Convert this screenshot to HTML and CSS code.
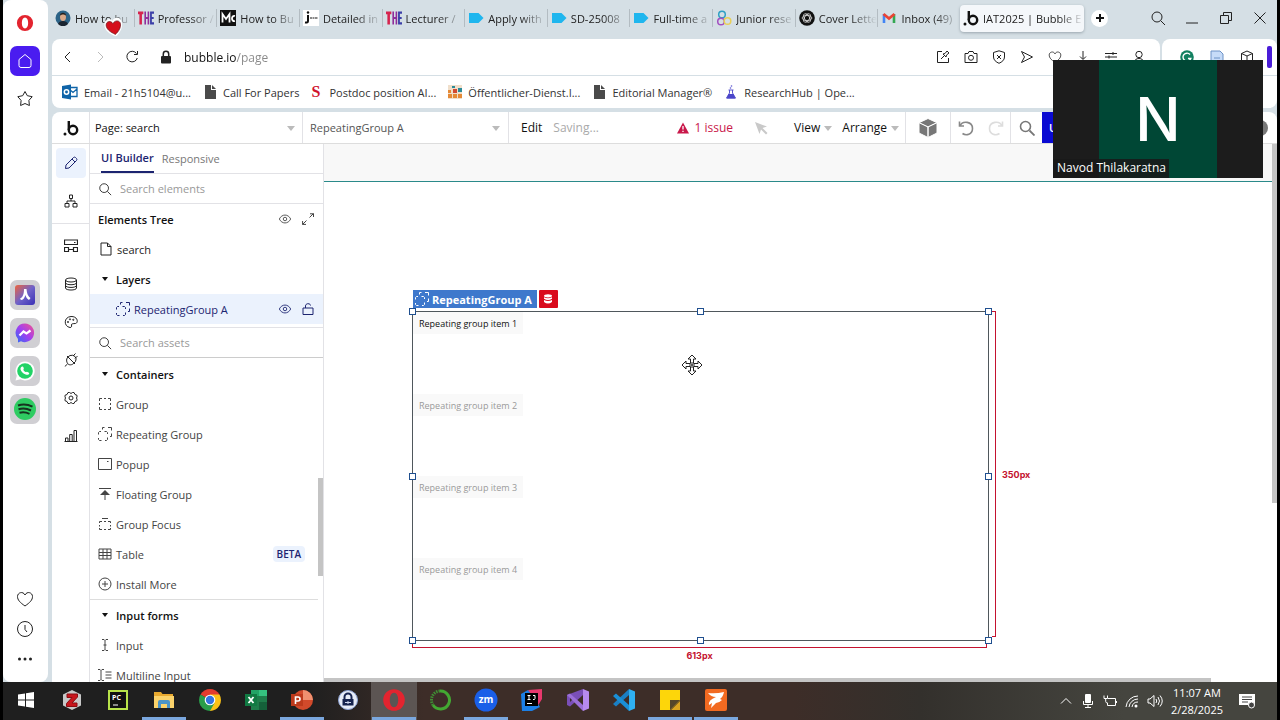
FILE: index.html
```html
<!DOCTYPE html>
<html lang="en">
<head>
  <meta charset="UTF-8">
  <meta name="viewport" content="width=device-width, initial-scale=1.0">
  <title>IAT2025 | Bubble Editor</title>
  <link rel="stylesheet" href="styles.css">
</head>
<body>
  <!-- Shared icons -->
  <svg class="sprite" aria-hidden="true">
    <symbol id="i-search" viewBox="0 0 16 16"><circle cx="7" cy="7" r="5"/><path d="M10.7 10.7 15 15"/></symbol>
    <symbol id="i-caret" viewBox="0 0 8 8"><path d="M0 2h8L4 7z" fill="currentColor" stroke="none"/></symbol>
    <symbol id="i-caret-small" viewBox="0 0 8 8"><path d="M1 2h6L4 6z" fill="currentColor" stroke="none"/></symbol>
    <symbol id="i-heart" viewBox="0 0 18 18"><path d="M9 16C4 12.500 1.500 10 1.500 6.500 1.500 2.500 7 .8 9 5c2-4.200 7.500-2.500 7.500 1.500C16.500 10 14 12.500 9 16z"/></symbol>
    <symbol id="i-eye" viewBox="0 0 16 16"><path d="M1.500 8c3-6 10-6 13 0-3 6-10 6-13 0z"/><circle cx="8" cy="8" r="2"/></symbol>
    <symbol id="i-repeat" viewBox="0 0 14 14"><path d="M.5 7.500V5.500l1-1H3M6.500 4.500h2l1 1V7M9.500 10.500v2l-1 1H7M3.500 13.500h-2l-1-1V11M4.500 2.500V.5H6.500M10 .5h3.500V3.500M13.500 6.500v3H12"/></symbol>
    <symbol id="i-page" viewBox="0 0 14 14"><path d="M2 0h6v5h5v9H2zM9 0l4 4H9z" fill="#4a4a4a" stroke="none"/></symbol>
    <symbol id="i-tag" viewBox="0 0 16 12"><path d="M1 1h9.500L15.500 6l-5 5H1z" fill="#1fb6ee" stroke="none"/></symbol>
    <symbol id="i-the" viewBox="0 0 15 14"><g stroke="none"><path d="M0 1h5v2.500H3.700V13H1.300V3.500H0z" fill="#d6244e"/><path d="M6 1h1.500v5H9V1h1.500v12H9V8H7.500v5H6z" fill="#8f2d9b"/><path d="M11.300 1H15v2h-2v3h1.700v2H13v3h2v2h-3.700z" fill="#3b3fa8"/></g></symbol>
    <symbol id="i-bubble" viewBox="0 0 16 16"><circle cx="10" cy="10" r="4.200" fill="none" stroke="#111" stroke-width="2.400"/><path d="M5.800 1v9" stroke="#111" stroke-width="2.400"/><circle cx="2" cy="14" r="1.500" fill="#111" stroke="none"/></symbol>
    <symbol id="i-opera" viewBox="0 0 20 20"><path fill-rule="evenodd" d="M10 1a9 9 0 1 0 0 18 9 9 0 0 0 0-18zm0 3c2.200 0 3.500 2.600 3.500 6s-1.300 6-3.500 6-3.500-2.600-3.500-6S7.800 4 10 4z" fill="#e3242f" stroke="none"/></symbol>
  </svg>

  <div class="desktop">
    <div class="browser">

      <!-- Opera sidebar -->
      <nav class="sidebar">
        <button class="side-btn" aria-label="Opera"><svg class="ico-18"><use href="#i-opera"/></svg></button>
        <button class="side-btn home" aria-label="Home"><svg class="ico-16" viewBox="0 0 16 16"><path d="M2 6.500 8 1.500l6 5v6q0 2-2 2H4q-2 0-2-2z"/></svg></button>
        <button class="side-btn" aria-label="Bookmarks"><svg class="ico-18" viewBox="0 0 18 18"><path d="m9 1.500 2.300 4.200 4.900 1-3.300 3.700.5 5.100L9 13.500l-4.400 2 .5-5.100L1.800 6.700l4.900-1z" stroke-linejoin="round"/></svg></button>
        <div class="side-apps">
          <button class="app-btn" aria-label="Aria"><svg class="ico-20" viewBox="0 0 20 20"><defs><linearGradient id="aria" x1="0" y1="0" x2="1" y2="1"><stop offset="0" stop-color="#f0643c"/><stop offset=".5" stop-color="#6f62c9"/><stop offset="1" stop-color="#3a2fb5"/></linearGradient></defs><rect width="20" height="20" rx="3" fill="url(#aria)" stroke="none"/><path d="M9 4h2.500c.5 5 1.500 7 4 9l-1.500 2c-2-1-3-3-3.500-5-1 3-2.500 5-4.500 5l-1-1.500c3-1 4-5 4-9.500z" fill="#fff" stroke="none"/></svg></button>
          <button class="app-btn" aria-label="Messenger"><svg class="ico-20" viewBox="0 0 20 20"><defs><linearGradient id="msgr" x1="1" y1="0" x2="0" y2="1"><stop offset="0" stop-color="#f4548a"/><stop offset=".5" stop-color="#a33ff0"/><stop offset="1" stop-color="#2a6df5"/></linearGradient></defs><path d="M10 .5a9.300 9.300 0 1 1-4 17.800L3 19.500V16A9.300 9.300 0 0 1 10 .5z" fill="url(#msgr)" stroke="none"/><path d="m4.500 12.500 4-4 3 2 4-3" stroke="#fff" stroke-width="2.200"/></svg></button>
          <button class="app-btn" aria-label="WhatsApp"><svg class="ico-20" viewBox="0 0 20 20"><path d="M10 .5a9.500 9.500 0 1 1-4.500 17.800L.5 19.500l1.300-4.800A9.500 9.500 0 0 1 10 .5z" fill="#fff" stroke="none"/><circle cx="10" cy="10" r="7.800" fill="#22d366" stroke="none"/><path d="M7 5.500c1.500-.5 1.800 1.500 1.800 2.300-1.500 1 1.700 4.200 2.900 3 1 .2 3 1 2.500 2-1.500 3-8.500-1-8.700-4.800 0-1 .5-2 1.500-2.500z" fill="#fff" stroke="none"/></svg></button>
          <button class="app-btn" aria-label="Spotify"><svg class="ico-24" viewBox="0 0 24 24"><circle cx="12" cy="12" r="11" fill="#2ecc62" stroke="none"/><path d="M5 8.500c5-1.500 10-1 14.500 1.200M5.500 12.300c4.500-1.300 8.500-.8 12.500 1.200M6.500 15.800c4-1 6.500-.6 10 1" stroke="#16331f" stroke-width="2"/></svg></button>
        </div>
        <div class="side-bottom">
          <button class="side-btn" aria-label="Favourites"><svg class="ico-18"><use href="#i-heart"/></svg></button>
          <button class="side-btn" aria-label="History"><svg class="ico-18" viewBox="0 0 18 18"><circle cx="9" cy="9" r="7.500"/><path d="M9 5v4.500l2 2.500"/></svg></button>
          <button class="side-btn" aria-label="More"><svg class="ico-16" viewBox="0 0 16 16"><g fill="#222" stroke="none"><circle cx="2.500" cy="8" r="1.500"/><circle cx="8" cy="8" r="1.500"/><circle cx="13.500" cy="8" r="1.500"/></g></svg></button>
        </div>
      </nav>

      <div class="main">
        <!-- Tab strip -->
        <header class="tab-strip">
          <div class="tabs">
            <button class="tab"><svg class="ico-16" viewBox="0 0 16 16"><circle cx="8" cy="8" r="7.500" fill="#2c6387" stroke="none"/><path d="M3 14c1-4 9-4 10 0-3 3-7 3-10 0z" fill="#1a2430" stroke="none"/><ellipse cx="8" cy="7" rx="3" ry="4" fill="#d9a888" stroke="none"/><path d="M4.800 6C4.500 1.500 11.500 1.500 11.200 6 10 4 6 4 4.800 6z" fill="#222" stroke="none"/></svg><span>How to bu</span></button>
            <button class="tab"><svg class="ico-16"><use href="#i-the"/></svg><span>Professor /</span></button>
            <button class="tab"><svg class="ico-16" viewBox="0 0 16 16"><rect width="16" height="16" fill="#111" stroke="none"/><path d="M2.500 12.500V4l3.500 5L9.500 4v8.500M15 6c-4-1-4 6 0 5" stroke="#fff" stroke-width="1.800"/></svg><span>How to Bu</span></button>
            <button class="tab"><svg class="ico-16" viewBox="0 0 16 16"><rect width="16" height="16" fill="#fff" stroke="none"/><path d="M5 5v6q0 2-3 1.500" stroke="#111" stroke-width="2"/><circle cx="5" cy="2.500" r="1.200" fill="#111" stroke="none"/><path d="M7 8h8" stroke="#888" stroke-width="2" stroke-dasharray="2 .5"/></svg><span>Detailed in</span></button>
            <button class="tab"><svg class="ico-16"><use href="#i-the"/></svg><span>Lecturer /</span></button>
            <button class="tab"><svg class="ico-16"><use href="#i-tag"/></svg><span>Apply with</span></button>
            <button class="tab"><svg class="ico-16"><use href="#i-tag"/></svg><span>SD-25008</span></button>
            <button class="tab"><svg class="ico-16"><use href="#i-tag"/></svg><span>Full-time a</span></button>
            <button class="tab"><svg class="ico-16" viewBox="0 0 16 16"><circle cx="6" cy="4.500" r="3.300" stroke="#2f9fc4" stroke-width="1.500"/><circle cx="5" cy="11.500" r="3.300" stroke="#a24fc0" stroke-width="1.500"/><circle cx="11.500" cy="11" r="3.300" stroke="#e8cf58" stroke-width="1.500"/></svg><span>Junior rese</span></button>
            <button class="tab"><svg class="ico-16" viewBox="0 0 16 16"><circle cx="8" cy="8" r="7.800" fill="#111" stroke="none"/><g stroke="#ddd" stroke-width=".8"><ellipse cx="8" cy="8" rx="4.800" ry="2.500"/><ellipse cx="8" cy="8" rx="4.800" ry="2.500" transform="rotate(60 8 8)"/><ellipse cx="8" cy="8" rx="4.800" ry="2.500" transform="rotate(120 8 8)"/></g></svg><span>Cover Lette</span></button>
            <button class="tab"><svg class="ico-16" viewBox="0 0 16 16"><path d="M3 13V4" stroke="#4285f4" stroke-width="2.600"/><path d="M13 13V4" stroke="#34a853" stroke-width="2.600"/><path d="m2.500 4 5.500 4.500L13.500 4" stroke="#ea4335" stroke-width="2.800"/></svg><span>Inbox (49)</span></button>
          </div>
          <button class="tab active"><svg class="ico-16"><use href="#i-bubble"/></svg><span>IAT2025 | Bubble E</span></button>
          <button class="new-tab" aria-label="New tab"><svg class="ico-10" viewBox="0 0 10 10"><path d="M5 1v8M1 5h8" stroke="#111" stroke-width="2"/></svg></button>
          <div class="window-controls">
            <button aria-label="Search tabs"><svg class="ico-16"><use href="#i-search"/></svg></button>
            <button aria-label="Minimize"><svg class="ico-12" viewBox="0 0 12 12"><path d="M0 11h12"/></svg></button>
            <button aria-label="Restore"><svg class="ico-12" viewBox="0 0 12 12"><path d="M.5 3.500h8v8h-8zM3.500 3V.5h8v8H9"/></svg></button>
            <button aria-label="Close"><svg class="ico-12" viewBox="0 0 12 12"><path d="m.5.5 11 11m0-11-11 11"/></svg></button>
          </div>
          <svg class="reaction" viewBox="0 0 20 20"><g transform="rotate(-12 10 10)"><path d="M10 19.500C4 16 0 11 1 6 2 1 8 0 10 3.500 13-.5 19 2 18.700 7.500 18.500 12 15 17 10 19.500z" fill="#fff" stroke="none"/><path d="M9.800 17.500C5 14 2 10.500 2.700 6.500c.8-4 5.800-3.700 7 0 2.300-3.200 7.300-2.200 7.300 1.500 0 3.500-3.200 7.500-7.200 9.500z" fill="#d5101c" stroke="#5c0a10" stroke-width=".6"/></g></svg>
        </header>

        <!-- Address bar -->
        <div class="address-row">
          <div class="address-bar">
            <button aria-label="Back"><svg class="ico-12" viewBox="0 0 12 12"><path d="M8 1 3 6l5 5"/></svg></button>
            <button class="disabled" aria-label="Forward"><svg class="ico-12" viewBox="0 0 12 12"><path d="m4 1 5 5-5 5"/></svg></button>
            <button aria-label="Reload"><svg class="ico-14" viewBox="0 0 14 14"><path d="M11.500 3.500A5.300 5.300 0 1 0 12.300 8M12.500 1v3.500H9"/></svg></button>
            <svg class="ico-14 lock" viewBox="0 0 14 14"><rect x="2" y="6" width="10" height="7.500" rx="1" fill="#222" stroke="none"/><path d="M4.300 6V4a2.700 2.700 0 0 1 5.400 0v2" stroke="#222" stroke-width="1.500"/></svg>
            <input class="url" type="text" aria-label="Address" value="bubble.io/page">
            <div class="page-actions">
              <button aria-label="Pin"><svg class="ico-14" viewBox="0 0 14 14"><path d="M6 1.500H1.500v11h11V8M5 9l3-3M7 4l3 3 .5-2 2.500-2-2-2-2 2.500z"/></svg></button>
              <button aria-label="Snapshot"><svg class="ico-14" viewBox="0 0 14 14"><path d="M1 3.500h3l1-2h4l1 2h3v9H1z"/><circle cx="7" cy="7.800" r="2.500"/></svg></button>
              <button aria-label="Shield"><svg class="ico-14" viewBox="0 0 14 14"><path d="M7 .8 12.500 2.500V7c0 3-2.500 5-5.500 6.300C4 12 1.500 10 1.500 7V2.500zM5 5l4 4m0-4L5 9"/></svg></button>
              <button aria-label="Send"><svg class="ico-14" viewBox="0 0 14 14"><path d="m1.500 1.500 11 5.500-11 5.500L4.500 7z"/></svg></button>
              <button aria-label="Like"><svg class="ico-14"><use href="#i-heart"/></svg></button>
              <button aria-label="Downloads"><svg class="ico-14" viewBox="0 0 14 14"><path d="M7 1v8M4 6.500 7 9.500l3-3M1 10v3h12v-3"/></svg></button>
              <button aria-label="Setup"><svg class="ico-14" viewBox="0 0 14 14"><path d="M1 3.500h12M1 7h12M1 10.500h12M9 2v3M5 5.500v3"/></svg></button>
              <button aria-label="Profile"><svg class="ico-14" viewBox="0 0 14 14"><circle cx="7" cy="4.500" r="3.200"/><path d="M1.500 13c1-6 10-6 11 0"/></svg></button>
            </div>
          </div>
          <div class="extensions">
            <button aria-label="Grammarly"><svg class="ico-14" viewBox="0 0 14 14"><circle cx="7" cy="7" r="6.800" fill="#128060" stroke="none"/><path d="M10 4.500a4 4 0 1 0 .8 4H8" stroke="#fff" stroke-width="1.400"/></svg></button>
            <button aria-label="Docs"><svg class="ico-14" viewBox="0 0 14 14"><path d="M1 1h9l3 3v9H1z" fill="#c6dbf8" stroke="#6d92c6"/><path d="M4 8h6" stroke="#6d92c6"/></svg></button>
            <button aria-label="Extensions"><svg class="ico-14" viewBox="0 0 14 14"><path d="m7 1 5.500 2.500v7L7 13l-5.500-2.500v-7zM1.500 3.500 7 6l5.500-2.500M7 6v7"/></svg></button>
            <span class="accent"></span>
          </div>
        </div>

        <!-- Bookmarks -->
        <nav class="bookmarks">
          <a href="#"><svg class="ico-16" viewBox="0 0 16 16"><path d="M7 3.500h8v9H7zM7 5l4 3.500L15 5" fill="#fff" stroke="#0f64a8" stroke-width="1.300"/><path d="m0 2 9-1.500v15L0 14z" fill="#0f64a8" stroke="none"/><circle cx="4.500" cy="8" r="2.200" stroke="#fff" stroke-width="1.500"/></svg>Email - 21h5104@u...</a>
          <a href="#"><svg class="ico-14"><use href="#i-page"/></svg>Call For Papers</a>
          <a href="#"><b class="fav-s">S</b>Postdoc position AI...</a>
          <a href="#"><svg class="ico-14" viewBox="0 0 14 14"><rect width="14" height="14" fill="#f0dfcb" stroke="none"/><path d="M0 9h4v4H0zM5 9h4v4H5zM10 9h4v4h-4zM0 5h3v3H0z" fill="#e58a36" stroke="none"/><path d="M5 4h4v4H5z" fill="#d14b32" stroke="none"/><path d="M10 3h4v4h-4zM4 1h3v2H4z" fill="#2b8a98" stroke="none"/></svg>Öffentlicher-Dienst.I...</a>
          <a href="#"><svg class="ico-14"><use href="#i-page"/></svg>Editorial Manager®</a>
          <a href="#"><svg class="ico-14" viewBox="0 0 14 14"><path d="M5.500 5v3L2.500 13h9l-3-5V5M4.500 5h5" stroke="#5b56cf"/><path d="m4.500 9-2 4.500h9l-2-4.500z" fill="#4b46c9" stroke="none"/><circle cx="6.500" cy="3" r=".8" fill="#5b56cf" stroke="none"/><circle cx="7.500" cy="1" r=".8" fill="#5b56cf" stroke="none"/></svg>ResearchHub | Ope...</a>
        </nav>

        <!-- Bubble editor -->
        <div class="editor">
          <div class="toolbar">
            <button class="logo" aria-label="Bubble"><svg class="ico-16"><use href="#i-bubble"/></svg></button>
            <label class="picker page-picker"><select aria-label="Page"><option>Page: search</option></select><svg class="ico-8"><use href="#i-caret"/></svg></label>
            <label class="picker element-picker"><select aria-label="Element"><option>RepeatingGroup A</option></select><svg class="ico-8"><use href="#i-caret"/></svg></label>
            <div class="tool-menu">
              <button>Edit</button>
              <span class="saving">Saving...</span>
              <button class="issue"><svg class="ico-12" viewBox="0 0 12 12"><path d="M6 .5 12 11.500H0z" fill="#c9184a" stroke="none"/><path d="M6 4v3.500M6 8.800V10" stroke="#fff" stroke-width="1.300"/></svg>1 issue</button>
              <svg class="ico-14 pointer" viewBox="0 0 14 14"><path d="m1 1 12 4.500-4.500 1.500 5 5-1.500 1.500-5-5L5.500 13z" fill="#c9c9c9" stroke="none"/></svg>
              <button class="menu">View<svg class="ico-8"><use href="#i-caret"/></svg></button>
              <button class="menu">Arrange<svg class="ico-8"><use href="#i-caret"/></svg></button>
            </div>
            <button class="cell cube" aria-label="Components"><svg class="ico-20" viewBox="0 0 20 20"><g fill="#777" stroke="#fff"><path d="m10 .5 9 4.200-9 4.300-9-4.300z"/><path d="M1 4.700 10 9v10.500l-9-4.500zM19 4.700 10 9v10.500l9-4.500z"/></g></svg></button>
            <div class="cell history">
              <button aria-label="Undo"><svg class="ico-16" viewBox="0 0 16 16"><path d="M1.500 1.500v4.500H6M2 6c2.500-6 12.500-4.500 12.500 2.500 0 6-6.500 7.500-10 5" stroke="#888" stroke-width="1.600"/></svg></button>
              <button aria-label="Redo"><svg class="ico-16" viewBox="0 0 16 16"><path d="M14.500 1.500v4.500H10M14 6C11.500 0 1.500 1.500 1.500 8.500c0 6 6.500 7.500 10 5" stroke="#ddd" stroke-width="1.600"/></svg></button>
            </div>
            <button class="cell find" aria-label="Find"><svg class="ico-16" viewBox="0 0 16 16"><circle cx="6.500" cy="6.500" r="5" stroke-width="1.600"/><path d="m10.500 10.500 5 5" stroke-width="1.800"/></svg></button>
            <button class="upgrade">Upgrade</button>
            <span class="avatar"></span>
          </div>

          <div class="workspace">
            <nav class="rail">
              <button class="current" aria-label="Design"><svg class="ico-14" viewBox="0 0 14 14"><path d="m1.500 12.500.5-3.500L9.500 1.500q1-.8 2 0l1 1q.8 1 0 2L5 12zM8 3l3 3"/></svg></button>
              <button aria-label="Workflow"><svg class="ico-14" viewBox="0 0 14 14"><path d="M5.500 1h3v3.500h-3zM1 9.500h4V13H1zM9 9.500h4V13H9zM7 4.500V7M3 9.500V7h8v2.500"/></svg></button>
              <hr>
              <button aria-label="Components"><svg class="ico-14" viewBox="0 0 14 14"><path d="M.5 1h13v4.500H.5zM.5 8.500h4v4h-4zM9.500 8.500h4v4h-4zM4.500 10.500h5M10 3.500h1.500" stroke-width="1.200"/></svg></button>
              <button aria-label="Data"><svg class="ico-14" viewBox="0 0 14 14"><ellipse cx="7" cy="3" rx="5.500" ry="2"/><path d="M1.500 3v8c0 2.700 11 2.700 11 0V3M1.500 5.700c0 2.700 11 2.700 11 0M1.500 8.400c0 2.700 11 2.700 11 0"/></svg></button>
              <button aria-label="Styles"><svg class="ico-14" viewBox="0 0 14 14"><path d="M6 12.500C-.5 11.500-.5 2 7 1.500c7-.3 7.500 6.500 4.500 7-2.500.3-4-.2-4 1.500.3 1.500 0 2.600-1.500 2.500z"/><circle cx="4" cy="7" r=".6"/><circle cx="6" cy="4.300" r=".6"/><circle cx="9.300" cy="4.800" r=".6"/></svg></button>
              <button aria-label="Plugins"><svg class="ico-14" viewBox="0 0 14 14"><path d="m4 4 6 6c-2 2.500-5 2-6 1s-2.500-4.500 0-7zM4 4l2-1.500q3-1 5 1t.5 5L10 10M3.500 11 .8 13.500M9 3l2.500-2.500M11 5.500 13.500 3M3 3l8 8"/></svg></button>
              <button aria-label="Settings"><svg class="ico-14" viewBox="0 0 14 14"><path d="M4 1.500h1.500L7 2.500l1.500-1H10l1 2 2 .8v1.500L12.500 7l.5 1.200v1.500l-2 .8-1 2H8.500L7 11.500l-1.500 1H4l-1-2-2-.8V8.200L1.500 7 1 5.800V4.300l2-.8z"/><circle cx="7" cy="7" r="2"/></svg></button>
              <button aria-label="Logs"><svg class="ico-14" viewBox="0 0 14 14"><path d="M1.500 9h2.500v3.500H1.500zM5.700 5.500h2.500v7H5.700zM10 1.500h2.500v11H10zM.5 12.500h13"/></svg></button>
            </nav>

            <aside class="panel">
              <div class="panel-tabs">
                <button class="selected">UI Builder</button>
                <button>Responsive</button>
              </div>
              <label class="panel-search"><svg class="ico-14"><use href="#i-search"/></svg><input type="text" placeholder="Search elements"></label>
              <div class="row tree-title">Elements Tree
                <span class="row-icons"><svg class="ico-14"><use href="#i-eye"/></svg><svg class="ico-12" viewBox="0 0 12 12"><path d="m7.500 4.500 4-4M8 .8h3.500V4M4.500 7.500l-4 4M.6 8v3.400H4"/></svg></span>
              </div>
              <div class="row page-row"><svg class="ico-14" viewBox="0 0 14 14"><path d="M2 1h6.500L12 4.500V13H2zM8.500 1v3.500H12"/></svg>search</div>
              <div class="row group-title"><svg class="ico-8"><use href="#i-caret-small"/></svg>Layers</div>
              <div class="row layer"><svg class="ico-14"><use href="#i-repeat"/></svg>RepeatingGroup A
                <span class="row-icons"><svg class="ico-14"><use href="#i-eye"/></svg><svg class="ico-12" viewBox="0 0 12 12"><path d="M1 5h10v6.500H1zM3.500 5V3c0-3 5-3 5-.5"/></svg></span>
              </div>
              <label class="panel-search assets"><svg class="ico-14"><use href="#i-search"/></svg><input type="text" placeholder="Search assets"></label>
              <div class="palette">
                <div class="row group-title"><svg class="ico-8"><use href="#i-caret-small"/></svg>Containers</div>
                <div class="row item"><svg class="ico-14" viewBox="0 0 14 14"><path d="M1.500 4V1.500H4M6 1.500h2M10 1.500h2.500V4M12.500 6v2M12.500 10v2.500H10M8 12.500H6M4 12.500H1.500V10M1.500 8V6"/></svg>Group</div>
                <div class="row item"><svg class="ico-14"><use href="#i-repeat"/></svg>Repeating Group</div>
                <div class="row item"><svg class="ico-14" viewBox="0 0 14 14"><path d="M.5 1.500h13v11H.5zM9 4.500h1.500"/></svg>Popup</div>
                <div class="row item"><svg class="ico-14" viewBox="0 0 14 14"><path d="M1 1.500h12M7 6v7"/><path d="m7 3 5 5H2z" fill="#444" stroke="none"/></svg>Floating Group</div>
                <div class="row item"><svg class="ico-14" viewBox="0 0 14 14"><path d="M4 1.500h6M1.500 6V4.500H4M6 4.500h2M10 4.500h2.500V6M12.500 8v1.500M12.500 11v1.500H10M8 12.500H6M4 12.500H1.500V11M1.500 9.500V8"/></svg>Group Focus</div>
                <div class="row item"><svg class="ico-14" viewBox="0 0 14 14"><path d="M1 2h12v10H1zM1 5.500h12M1 8.500h12M5 2v10M9 2v10"/></svg>Table<span class="beta">BETA</span></div>
                <div class="row item"><svg class="ico-14" viewBox="0 0 14 14"><circle cx="7" cy="7" r="6"/><path d="M7 4v6M4 7h6"/></svg>Install More</div>
                <div class="row group-title divided"><svg class="ico-8"><use href="#i-caret-small"/></svg>Input forms</div>
                <div class="row item"><svg class="ico-14" viewBox="0 0 14 14"><path d="M4 1.500h2l1 1 1-1h2M4 12.500h2l1-1 1 1h2M7 2.500v9M5.500 7h3"/></svg>Input</div>
                <div class="row item"><svg class="ico-14" viewBox="0 0 14 14"><path d="M0 1.500h2l1 1 1-1h2M0 12.500h2l1-1 1 1h2M3 2.500v9M7.500 4h6M7.500 7h6M7.500 10h6"/></svg>Multiline Input</div>
                <span class="palette-thumb"></span>
              </div>
            </aside>

            <!-- Design canvas -->
            <main class="canvas">
              <div class="page-header"></div>
              <div class="element-tags">
                <span class="element-name"><svg class="ico-14"><use href="#i-repeat"/></svg>RepeatingGroup A</span>
                <button class="data-tag" aria-label="Data source"><svg class="ico-10" viewBox="0 0 10 10"><g fill="#fff" stroke="none"><ellipse cx="5" cy="1.800" rx="4" ry="1.600"/><path d="M1 3.300q4 2 8 0v1.500q-4 2.400-8 0zM1 6q4 2 8 0v2q-4 3-8 0z"/></g></svg></button>
              </div>
              <div class="repeating-group">
                <div><span class="cell-label first">Repeating group item 1</span></div>
                <div><span class="cell-label">Repeating group item 2</span></div>
                <div><span class="cell-label">Repeating group item 3</span></div>
                <div><span class="cell-label">Repeating group item 4</span></div>
                <span class="measure-w">613px</span>
                <span class="measure-h">350px</span>
                <i class="handle top left"></i><i class="handle top center"></i><i class="handle top right"></i>
                <i class="handle middle left"></i><i class="handle middle right"></i>
                <i class="handle bottom left"></i><i class="handle bottom center"></i><i class="handle bottom right"></i>
              </div>
              <svg class="move-cursor" viewBox="0 0 22 22"><path d="m11 1 4 4h-2.500v4.500H17V7l4 4-4 4v-2.500h-4.500V17H15l-4 4-4-4h2.500v-4.500H5V15l-4-4 4-4v2.500h4.500V5H7z" fill="#fff" stroke="#222"/><path d="M11 8v6M8 11h6" stroke="#222"/></svg>
              <span class="scroll-y"></span>
              <span class="scroll-x"></span>
            </main>
          </div>
        </div>
      </div>

      <!-- Meeting video tile -->
      <div class="call-tile">
        <div class="call-avatar">N</div>
        <span class="call-name">Navod Thilakaratna</span>
      </div>
    </div>

    <!-- Windows taskbar -->
    <footer class="taskbar">
      <button class="task" aria-label="Start"><svg class="ico-16" viewBox="0 0 16 16"><path d="m0 2.500 7-1v6H0zM8 1.300 16 0v7.500H8zM0 8.500h7v6l-7-1zM8 8.500h8V16l-8-1.300z" fill="#fff" stroke="none"/></svg></button>
      <button class="task" aria-label="Zotero"><svg class="ico-20" viewBox="0 0 20 20"><path d="m10 0 9 4.500v11L10 20l-9-4.500v-11z" fill="#c8c8c8" stroke="none"/><path d="M5 4h10.500v3L10 13h5v3.500H4.500v-3L10 7.500H5z" fill="#c8161d" stroke="#8a0d12"/></svg></button>
      <button class="task" aria-label="PyCharm"><svg class="ico-20" viewBox="0 0 20 20"><path d="M0 0h20v20H0z" fill="#b8e34a" stroke="none"/><path d="M2 2h16v16H2z" fill="#111" stroke="none"/><path d="M5 15h5" stroke="#fff"/><text x="4" y="10" class="t-pc">PC</text></svg></button>
      <button class="task open" aria-label="File Explorer"><svg class="ico-20" viewBox="0 0 20 20"><path d="M0 2h7l1.500 2H19v13H0z" fill="#e8a92f" stroke="none"/><path d="M0 6h20v12H0z" fill="#fbd36b" stroke="none"/><path d="M4 18v-6q0-2 2-2h8q2 0 2 2v6h-3v-4H7v4z" fill="#4a94c8" stroke="none"/></svg></button>
      <button class="task" aria-label="Chrome"><svg class="ico-24" viewBox="0 0 24 24"><g stroke="none"><path d="M12 12 2.500 6.500a11 11 0 0 1 19 0z" fill="#e33b2e"/><path d="M12 12h-1l1 11a11 11 0 0 0 9.500-16.500H12z" fill="#fbc116"/><path d="M12 12 2.500 6.500A11 11 0 0 0 12 23l4.500-8z" fill="#2a9d4a"/><circle cx="12" cy="12" r="5.300" fill="#fff"/><circle cx="12" cy="12" r="4.200" fill="#3474e0"/></g></svg></button>
      <button class="task" aria-label="Excel"><svg class="ico-24" viewBox="0 0 24 24"><g stroke="none"><path d="M7 2h16v20H7z" fill="#1f7d4b"/><path d="M15 2h8v6h-8z" fill="#35c27f"/><path d="M7 2h8v6H7z" fill="#23a366"/><path d="M15 14h8v8h-8z" fill="#15613a"/><path d="M1 6h12v12H1z" fill="#117a43"/></g><path d="m4.500 9 5 6m0-6-5 6" stroke="#fff" stroke-width="1.800"/></svg></button>
      <button class="task open" aria-label="PowerPoint"><svg class="ico-24" viewBox="0 0 24 24"><g stroke="none"><circle cx="13" cy="12" r="10" fill="#d14a2b"/><path d="M13 2a10 10 0 0 1 10 10H13z" fill="#f0906f"/><path d="M1 6h12v12H1z" fill="#bd3a1c"/></g><path d="M5.500 16V9H8q2 0 2 2t-2 2H6" stroke="#fff" stroke-width="1.600"/></svg></button>
      <button class="task" aria-label="KeePass"><svg class="ico-20" viewBox="0 0 20 20"><circle cx="10" cy="10" r="9.500" fill="#e7ecf8" stroke="#8ea4d6"/><rect x="4.500" y="9" width="11" height="6.500" fill="#16234f" stroke="none"/><path d="M6.500 9V7a3.500 3.500 0 0 1 7 0v2" stroke="#16234f" stroke-width="2"/><path d="M10 11v3M7 12.500h6" stroke="#cfd8ef"/></svg></button>
      <button class="task open focused" aria-label="Opera"><svg class="ico-24"><use href="#i-opera"/></svg></button>
      <button class="task" aria-label="Anaconda"><svg class="ico-24" viewBox="0 0 24 24"><path d="M12 3a9 9 0 1 1-7 14" stroke="#43a832" stroke-width="3"/><path d="M12 3A9 9 0 0 0 5 17" stroke="#3f8f34" stroke-width="3" stroke-dasharray="1.500 1"/></svg></button>
      <button class="task open" aria-label="Zoom"><svg class="ico-24" viewBox="0 0 24 24"><circle cx="12" cy="12" r="11.500" fill="#1a5fe8" stroke="none"/><text x="12" y="15" text-anchor="middle" class="t-zm">zm</text></svg></button>
      <button class="task" aria-label="IntelliJ IDEA"><svg class="ico-24" viewBox="0 0 24 24"><g stroke="none"><path d="M8 2 22 1v10l-5 8z" fill="#e8386d"/><path d="M1 6 8 2l12 17-8 4H2z" fill="#1c7fe6"/><path d="M5 5h13v13H5z" fill="#000"/></g><path d="M7.500 7.500h3M9 7.500v4M7.500 11.500h3M13 7.500h2v3q0 1.500-2 1M7 15.500h5" stroke="#fff"/></svg></button>
      <button class="task" aria-label="Visual Studio"><svg class="ico-24" viewBox="0 0 24 24"><g stroke="none"><path d="M17 1 23 3.500v17L17 23z" fill="#b78af0"/><path d="M1 7v10l3 1.500L17 7V1z" fill="#7a4fb8"/><path d="m1 7 3-1.500L17 17v6z" fill="#9b6fd8"/><path d="M4 10v4l2-2z" fill="#3d2d28"/></g></svg></button>
      <button class="task" aria-label="VS Code"><svg class="ico-24" viewBox="0 0 24 24"><g stroke="none"><path d="M17 1v6L4 18.500 1 16z" fill="#1a7fc4"/><path d="m1 8 3-2.500L17 17v6z" fill="#1a8fd6"/><path d="M17 1 23 3.500v17L17 23z" fill="#2fb0f2"/></g></svg></button>
      <button class="task open" aria-label="Sticky Notes"><svg class="ico-20" viewBox="0 0 20 20"><path d="M0 0h20v10L10 20H0z" fill="#fdd60a" stroke="none"/><path d="M10 20V10h10z" fill="#54462a" stroke="none"/><path d="M20 11v9h-9z" fill="#d9a520" stroke="none"/></svg></button>
      <button class="task open" aria-label="Foxit"><svg class="ico-24" viewBox="0 0 24 24"><rect x="1" y="1" width="22" height="22" rx="2" fill="#f26a21" stroke="none"/><path d="M4 5q8 1 16-1-1 5-4 7l2 1q-3 3-6 3l-5 5 1-5-3 2q-1-5 7-8-5 0-8-4z" fill="#fff" stroke="none"/></svg></button>

      <div class="tray">
        <svg class="ico-14" viewBox="0 0 14 14"><path d="m2 9.500 5-5 5 5"/></svg>
        <svg class="ico-14" viewBox="0 0 14 14"><rect x="4" y="0" width="6" height="9" rx="1" fill="#fff" stroke="none"/><path d="M2.500 7v3.500h9V7M7 10.500V13M4 13.500h6"/></svg>
        <svg class="ico-14" viewBox="0 0 14 14"><path d="M5 4.500h7.500v7H4.500V9M13.500 7v2M1 1.500v3h3.500v-3M2.700 4.500v3q0 1.500 2 1.500"/></svg>
        <svg class="ico-14" viewBox="0 0 14 14"><path d="M1 13A12 12 0 0 1 13 2M4 13a9 9 0 0 1 9-8M7 13a6 6 0 0 1 6-5"/><circle cx="11" cy="12" r="1.500" fill="#fff" stroke="none"/></svg>
        <svg class="ico-16" viewBox="0 0 16 16"><path d="M1 6h2l4-3.500v11L3 10H1zM9 6q1.500 2 0 4M11 4q3 4 0 8M13 2.500q4.500 5.500 0 11"/></svg>
        <time class="clock">11:07 AM<br>2/28/2025</time>
        <svg class="ico-16 notice" viewBox="0 0 16 16"><path d="M0 1h16v11h-3v3l-4-3H0z" fill="#fff" stroke="none"/><path d="M3 4h10M3 6.500h10M3 9h6" stroke="#444"/><circle cx="12.500" cy="12" r="3" fill="#444" stroke="#fff"/></svg>
      </div>
    </footer>
  </div>
</body>
</html>
```

FILE: styles.css
```css
:root {
  --chrome-bg: #d5dfe5;
  --line: #e2e2e6;
  --ink: #222;
  --muted: #999;
  --navy: #1c2470;
  --red: #c4122f;
}

* {
  margin: 0;
  padding: 0;
  box-sizing: border-box;
}

body {
  font-family: "Open Sans", sans-serif;
  font-size: 11px;
  color: var(--ink);
  background: #000;
}

button,
input,
select {
  font: inherit;
  color: inherit;
  background: none;
  border: none;
  outline: none;
}

button {
  display: flex;
  align-items: center;
  justify-content: center;
  white-space: nowrap;
  cursor: pointer;
}

a {
  color: inherit;
  text-decoration: none;
}

svg {
  flex: none;
  fill: none;
  stroke: currentColor;
}

.sprite {
  position: absolute;
  width: 0;
  height: 0;
}

.ico-8 { width: 8px; height: 8px; }
.ico-10 { width: 10px; height: 10px; }
.ico-12 { width: 12px; height: 12px; }
.ico-14 { width: 14px; height: 14px; }
.ico-16 { width: 16px; height: 16px; }
.ico-18 { width: 18px; height: 18px; }
.ico-20 { width: 20px; height: 20px; }
.ico-24 { width: 24px; height: 24px; }

.desktop {
  display: flex;
  flex-direction: column;
  height: 100vh;
  padding: 0 3px;
}

.browser {
  position: relative;
  display: flex;
  flex: 1;
  gap: 4px;
  min-height: 0;
  background: var(--chrome-bg);
}

/* Sidebar */
.sidebar {
  display: flex;
  flex-direction: column;
  align-items: center;
  gap: 8px;
  width: 45px;
  padding: 8px 1px 8px 0;
  background: #fff;
  border-radius: 8px;
}

.side-btn {
  width: 30px;
  height: 30px;
}

.home {
  color: #fff;
  background: #4a1cf0;
  border-radius: 7px;
}

.side-apps {
  display: flex;
  flex-direction: column;
  gap: 8px;
  margin-top: 158px;
}

.app-btn {
  width: 30px;
  height: 30px;
  background: #d0cfd3;
  border-radius: 7px;
}

.side-bottom {
  margin-top: auto;
}

.main {
  display: flex;
  flex: 1;
  flex-direction: column;
  min-width: 0;
}

/* Tab strip */
.tab-strip {
  position: relative;
  display: flex;
  align-items: center;
  height: 36px;
  padding-right: 9px;
}

.tabs {
  display: flex;
  flex: 1;
  min-width: 0;
}

.tab {
  flex: 1;
  gap: 4px;
  min-width: 0;
  height: 18px;
  padding: 0 0 0 3px;
  border-right: 1px solid #b3bcc2;
}

.tabs .tab:last-child {
  border-right: none;
}

.tab span {
  flex: 1;
  overflow: hidden;
  text-align: left;
  mask-image: linear-gradient(90deg, #000 55%, transparent);
}

.tab.active {
  flex: none;
  width: 124px;
  height: 27px;
  background: #f4f7fa;
  border: none;
  border-radius: 4px;
  box-shadow: 0 1px 3px #9aa5ad;
}

.tab.active span {
  mask-image: linear-gradient(90deg, #000 75%, transparent);
}

.new-tab {
  width: 17px;
  height: 17px;
  margin: 0 42px 0 7px;
  background: #fff;
  border-radius: 50%;
}

.window-controls {
  display: flex;
  gap: 18px;
}

.window-controls button {
  width: 16px;
}

.reaction {
  position: absolute;
  left: 52px;
  top: 17px;
  width: 20px;
  height: 20px;
}

/* Address bar */
.address-row {
  display: flex;
  gap: 2px;
  height: 36px;
  margin-top: 3px;
}

.address-bar,
.extensions {
  display: flex;
  align-items: center;
  background: #fff;
  border-radius: 8px 8px 0 0;
}

.address-bar {
  flex: 1;
  padding: 0 14px 0 9px;
}

.address-bar > button {
  width: 14px;
  margin-right: 18px;
}

.disabled {
  color: #bbb;
}

.lock {
  margin: 0 11px 0 2px;
}

.url {
  flex: 1;
  min-width: 0;
  font-size: 12px;
  color: transparent;
  background: linear-gradient(90deg, #111 52px, #888 52px);
  background-clip: text;
}

.page-actions {
  display: flex;
  gap: 14px;
}

.extensions {
  gap: 16px;
  width: 115px;
  padding-left: 18px;
}

.accent {
  width: 5px;
  height: 22px;
  margin-left: -3px;
  background: #4a1cd8;
  border-radius: 2px;
}

/* Bookmarks */
.bookmarks {
  display: flex;
  align-items: center;
  gap: 12px;
  height: 32px;
  margin: 1px 0 4px;
  padding: 0 10px;
  background: #fff;
  border-radius: 0 0 8px 8px;
  color: #333;
}

.bookmarks a {
  display: flex;
  align-items: center;
  gap: 6px;
}

.fav-s {
  width: 12px;
  font-family: "Liberation Serif", serif;
  font-size: 16px;
  color: #d0122c;
}

/* Editor */
.editor {
  display: flex;
  flex: 1;
  flex-direction: column;
  min-height: 0;
  background: #fff;
  border-radius: 8px 8px 0 0;
  overflow: hidden;
}

.toolbar {
  display: flex;
  height: 32px;
  border-bottom: 1px solid #ddd;
}

.logo {
  width: 37px;
}

.picker {
  display: flex;
  align-items: center;
  padding: 0 7px 0 5px;
  border-left: 1px solid var(--line);
  color: #111;
}

.picker svg,
.menu svg {
  color: #bbb;
}

.picker select {
  flex: 1;
  min-width: 0;
  appearance: none;
}

.page-picker {
  width: 213px;
}

.element-picker {
  width: 207px;
  padding-right: 8px;
  padding-left: 7px;
  border-right: 1px solid var(--line);
  color: #555;
}

.tool-menu {
  display: flex;
  flex: 1;
  align-items: center;
  padding: 0 6px 0 12px;
  font-size: 12px;
  color: #111;
}

.saving {
  margin-left: 11px;
  color: #aaa;
}

.issue {
  gap: 6px;
  margin-left: auto;
  color: #c9184a;
}

.pointer {
  margin: 0 26px 0 21px;
}

.menu {
  gap: 4px;
}

.menu + .menu {
  margin-left: 10px;
}

.cell {
  border-left: 1px solid var(--line);
}

.cube {
  width: 45px;
}

.history {
  display: flex;
  justify-content: center;
  gap: 14px;
  width: 60px;
}

.find {
  width: 32px;
  color: #777;
}

.upgrade {
  width: 84px;
  color: #fff;
  background: #0a0ad2;
  font-weight: 600;
  justify-content: flex-start;
  padding-left: 7px;
}

.avatar {
  width: 16px;
  height: 16px;
  margin: 8px 9px 8px 126px;
  background: #777;
  border-radius: 50%;
}

.workspace {
  display: flex;
  flex: 1;
  min-height: 0;
}

.rail {
  display: flex;
  flex-direction: column;
  align-items: center;
  gap: 8px;
  width: 38px;
  padding-top: 4px;
  border-right: 1px solid var(--line);
  color: #222;
}

.rail button {
  flex: none;
  width: 30px;
  height: 30px;
  border-radius: 4px;
}

.rail .current {
  color: var(--navy);
  background: #ebf2fd;
}

.rail hr {
  width: 100%;
  height: 1px;
  margin: -1px 0;
  border: none;
  background: var(--line);
}

/* Panel */
.panel {
  display: flex;
  flex-direction: column;
  width: 234px;
  border-right: 1px solid var(--line);
}

.panel-tabs {
  display: flex;
  flex: none;
  gap: 8px;
  height: 30px;
  padding: 0 11px;
  border-bottom: 1px solid var(--line);
  color: #777;
}

.panel-tabs .selected {
  color: var(--navy);
  font-weight: 600;
  border-bottom: 2px solid var(--navy);
}

.panel-search {
  display: flex;
  flex: none;
  align-items: center;
  gap: 8px;
  height: 30px;
  padding: 0 8px;
  border-bottom: 1px solid var(--line);
}

.panel-search input {
  flex: 1;
  min-width: 0;
}

.panel-search input::placeholder {
  color: var(--muted);
}

.assets {
  height: 31px;
  margin-top: 3px;
  border-top: 1px solid var(--line);
  border-bottom: 1px solid #ccc;
}

.row {
  display: flex;
  flex: none;
  align-items: center;
  gap: 4px;
  height: 30px;
  padding: 0 9px 0 8px;
  white-space: nowrap;
}

.row-icons {
  display: flex;
  align-items: center;
  gap: 10px;
  margin-left: auto;
  color: #444;
}

.tree-title,
.group-title {
  color: #111;
  font-weight: 600;
}

.page-row {
  padding-left: 9px;
}

.group-title {
  gap: 7px;
  padding-left: 11px;
}

.layer {
  padding-left: 26px;
  color: var(--navy);
  background: #ebf2fd;
}

.layer .row-icons {
  color: var(--navy);
}

.palette {
  position: relative;
  flex: 1;
  min-height: 0;
  padding-top: 1px;
  overflow: hidden;
}

.item {
  color: #444;
}

.divided {
  border-top: 1px solid #ddd;
  margin-right: 5px;
  height: 31px;
}

.beta {
  margin: 0 9px 0 auto;
  padding: 1px 4px;
  font-size: 10px;
  font-weight: 600;
  color: var(--navy);
  background: #ebf2fd;
  border-radius: 4px;
}

.palette-thumb {
  position: absolute;
  top: 120px;
  right: 0;
  width: 5px;
  height: 98px;
  background: #c4c4c4;
}

/* Canvas */
.canvas {
  position: relative;
  flex: 1;
  min-width: 0;
  overflow: hidden;
}

.page-header {
  height: 38px;
  background: #f8f8f8;
  border-bottom: 1px solid #2a8a8a;
}

.element-tags {
  position: absolute;
  left: 89px;
  top: 146px;
  display: flex;
  gap: 2px;
}

.element-name {
  display: flex;
  align-items: center;
  gap: 3px;
  height: 18px;
  padding: 0 5px 0 2px;
  color: #fff;
  font-weight: 700;
  background: #3e78cc;
}

.data-tag {
  width: 19px;
  height: 18px;
  background: #d90a1c;
  border-radius: 1px;
}

.repeating-group {
  position: absolute;
  left: 88px;
  top: 167px;
  display: grid;
  grid-template-rows: repeat(4, 1fr);
  width: 577px;
  height: 330px;
  border: 1px solid #4f575c;
  font-size: 9px;
}

.cell-label {
  display: inline-block;
  padding: 5px 6px 4px;
  color: #999;
  background: #f9f9f9;
}

.cell-label.first {
  color: #111;
}

.handle {
  position: absolute;
  width: 7px;
  height: 7px;
  background: #fff;
  border: 1px solid #1f4f8f;
}

.handle.top { top: -4px; }
.handle.middle { top: calc(50% - 3px); }
.handle.bottom { bottom: -4px; }
.handle.left { left: -4px; }
.handle.center { left: calc(50% - 4px); }
.handle.right { right: -4px; }

.measure-w,
.measure-h {
  position: absolute;
  display: flex;
  align-items: center;
  font-family: Inter, sans-serif;
  font-weight: 700;
  color: var(--red);
}

.measure-w {
  flex-direction: column;
  gap: 2px;
  left: 0;
  right: 2px;
  top: calc(100% + 4px);
}

.measure-w::before {
  content: "";
  width: 100%;
  height: 3px;
  border: 1px solid var(--red);
  border-top: none;
}

.measure-h {
  gap: 6px;
  top: 0;
  bottom: 4px;
  left: calc(100% + 4px);
}

.measure-h::before {
  content: "";
  width: 3px;
  height: 100%;
  border: 1px solid var(--red);
  border-left: none;
}

.move-cursor {
  position: absolute;
  left: 357px;
  top: 210px;
  width: 22px;
  height: 22px;
}

.scroll-y,
.scroll-x {
  position: absolute;
  background: #c4c4c4;
}

.scroll-y {
  top: 0;
  right: 0;
  width: 5px;
  height: 359px;
}

.scroll-x {
  left: 0;
  right: 66px;
  bottom: 0;
  height: 4px;
}

/* Video tile over the window */
.call-tile {
  position: absolute;
  top: 60px;
  right: 14px;
  display: flex;
  justify-content: center;
  width: 210px;
  height: 118px;
  background: #1c1c1c;
}

.call-avatar {
  display: flex;
  align-items: center;
  justify-content: center;
  width: 118px;
  line-height: 64px;
  font-family: Inter, sans-serif;
  font-size: 60px;
  font-weight: 500;
  color: #fff;
  background: #004735;
}

.call-name {
  position: absolute;
  left: 0;
  bottom: 0;
  padding: 0 3px 2px 4px;
  font-size: 12px;
  color: #fff;
  background: rgba(25, 25, 25, 0.85);
}

/* Taskbar */
.taskbar {
  display: flex;
  height: 38px;
  background: linear-gradient(90deg, #1f1f1f 0, #1f1f1f 24%, #3d2d28 33%, #3d2d28 62%, #33302c 72%, #45453f 88%, #45453f);
  color: #fff;
}

.task {
  width: 46px;
  border-bottom: 3px solid transparent;
}

.task.open {
  border-image: linear-gradient(90deg, transparent 4px, #7aa7de 4px, #7aa7de 42px, transparent 42px) 3;
  border-style: solid;
  border-width: 0 0 3px;
}

.task.focused {
  background: #5c5553;
}

.t-pc {
  font: bold 7px "Open Sans", sans-serif;
  fill: #fff;
  stroke: none;
}

.t-zm {
  font: bold 10px "Open Sans", sans-serif;
  fill: #fff;
  stroke: none;
}

.tray {
  display: flex;
  align-items: center;
  gap: 8px;
  margin-left: auto;
  padding-right: 22px;
}

.clock {
  line-height: 17px;
  text-align: center;
}

.notice {
  margin-left: 8px;
}
```
